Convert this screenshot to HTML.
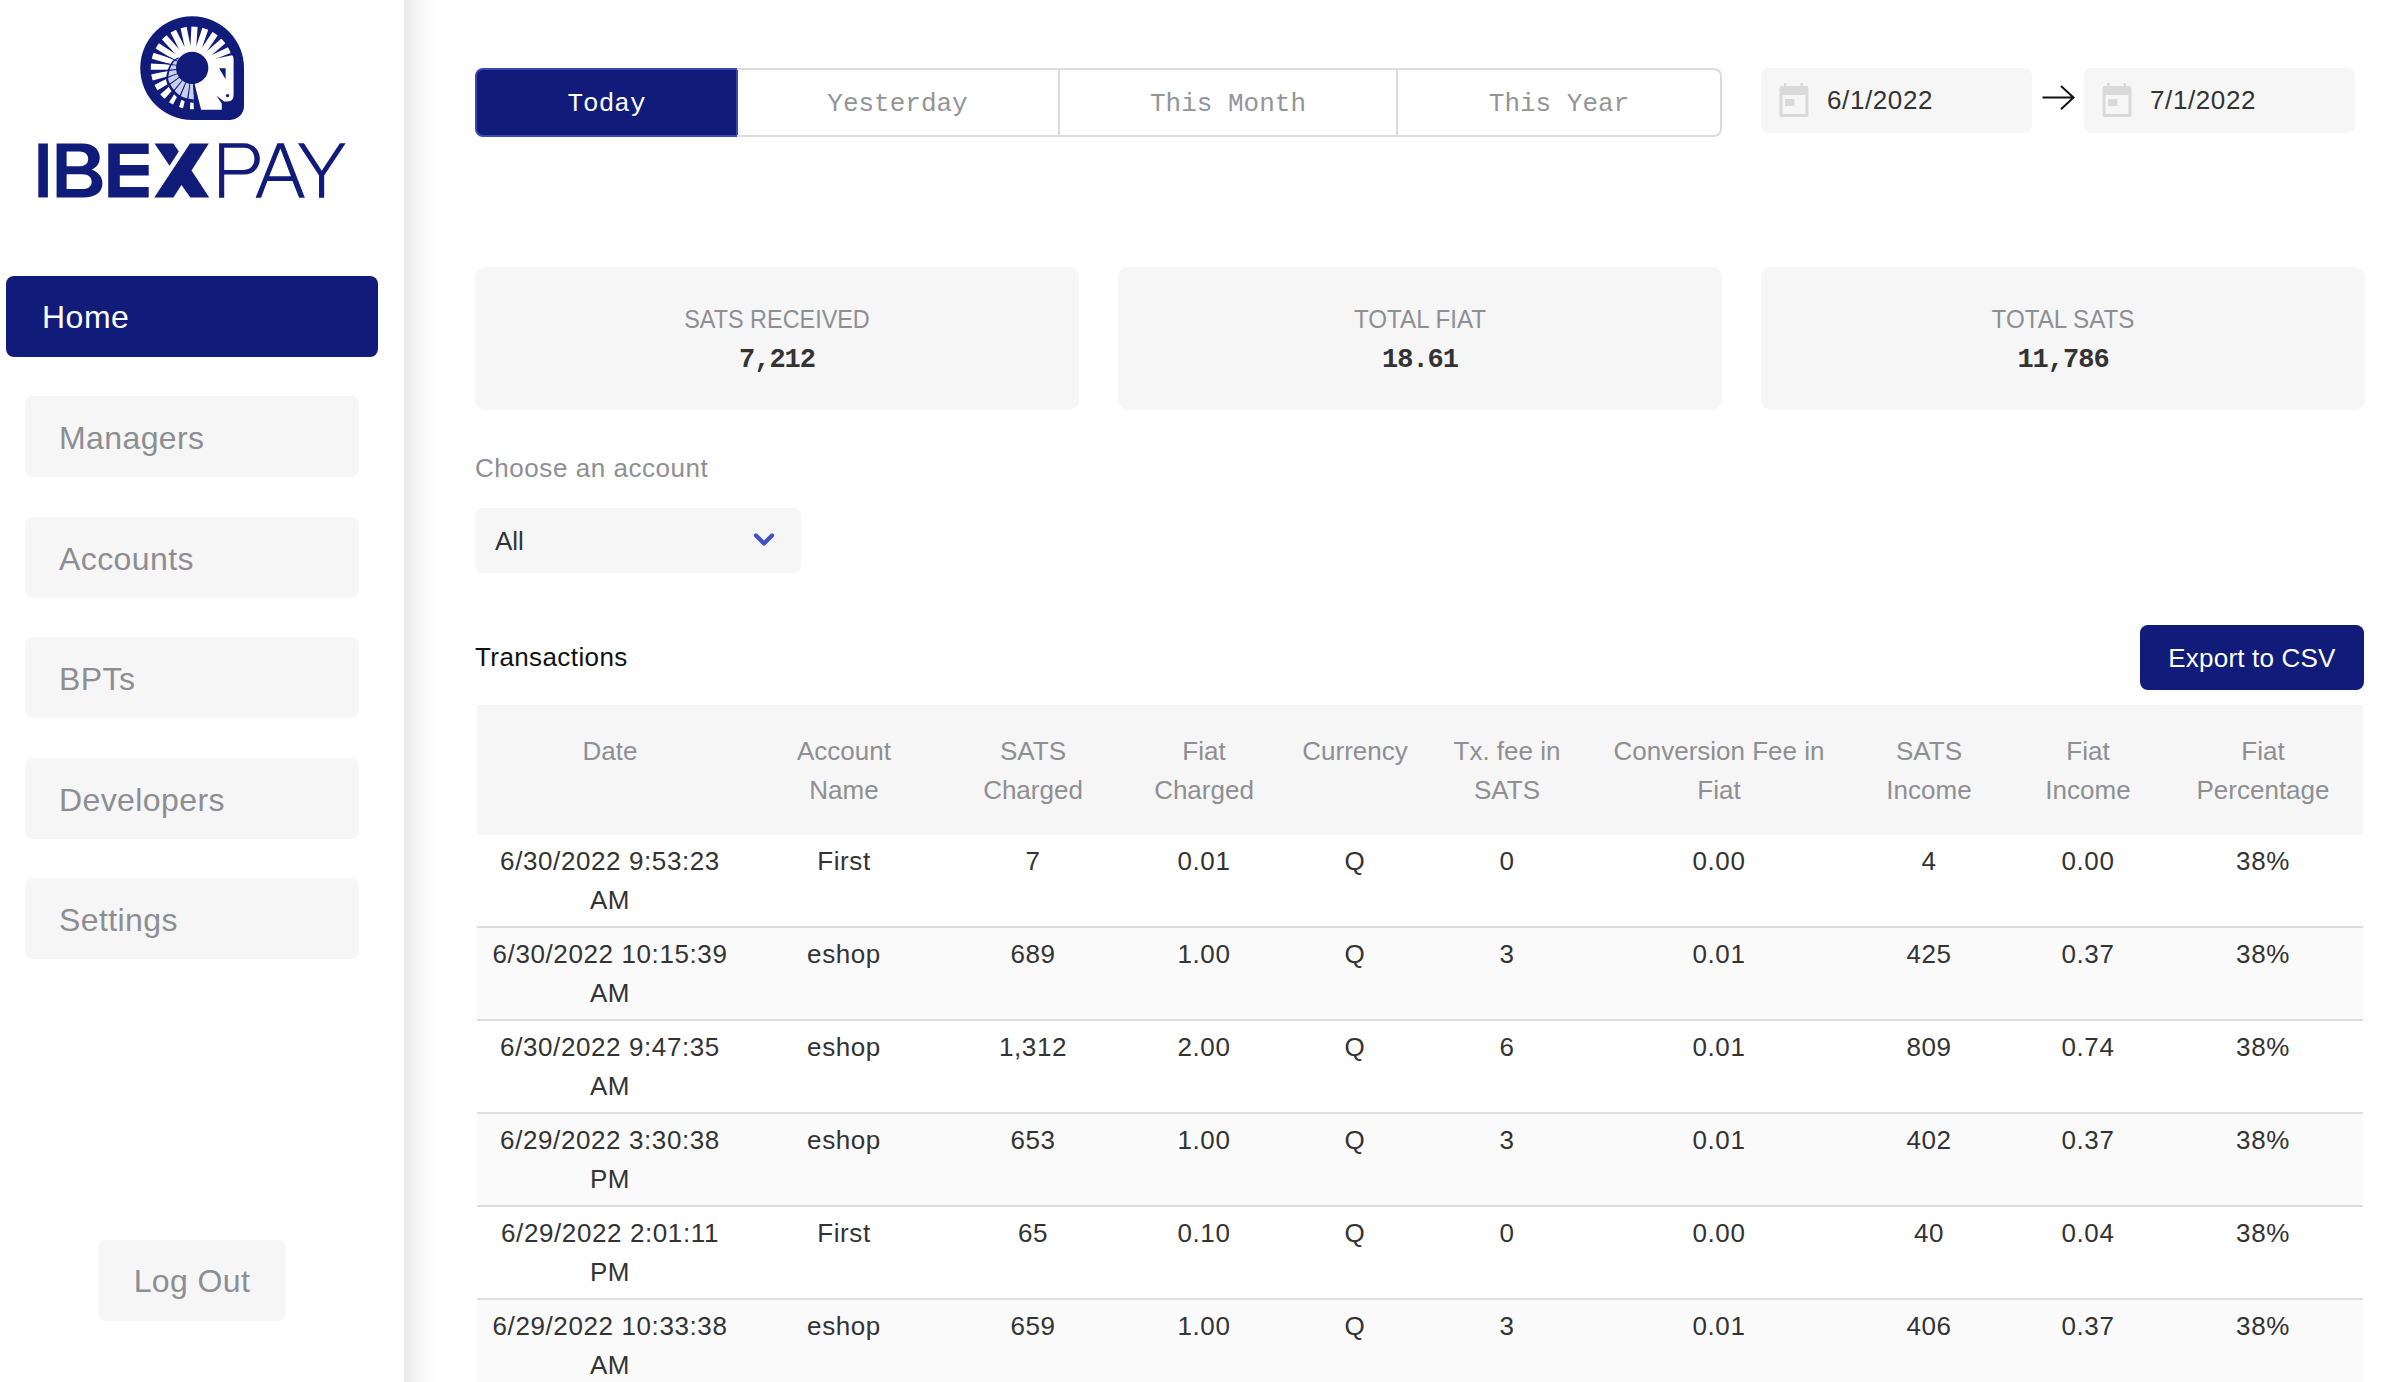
<!DOCTYPE html>
<html><head><meta charset="utf-8">
<style>
*{box-sizing:border-box;margin:0;padding:0}
html,body{width:2400px;height:1382px;overflow:hidden;background:#fff;font-family:"Liberation Sans",sans-serif}
.abs{position:absolute}
.side{position:absolute;left:0;top:0;width:404px;height:1382px;background:#fff}
.shadow{position:absolute;left:404px;top:0;width:34px;height:1382px;background:linear-gradient(to right,#e9e9e9,#f4f4f4 35%,#fdfdfd 80%,#fff)}
.nav{position:absolute;left:25px;width:334px;height:81px;background:#f6f6f6;border-radius:8px;color:#8c8e93;font-size:32px;line-height:84px;padding-left:34px;letter-spacing:0.4px}
.home{left:6px;width:372px;background:#111b7a;color:#fff;padding-left:36px;letter-spacing:0.5px;line-height:83px}
.logout{position:absolute;left:98px;top:1240px;width:188px;height:81px;background:#f6f6f6;border-radius:8px;color:#8c8e93;font-size:32px;line-height:83px;text-align:center;letter-spacing:0.4px}
.seg{position:absolute;top:68px;height:69px;border:2px solid #dcdcdc;color:#939497;font-family:"Liberation Mono",monospace;font-size:26px;line-height:68px;text-align:center}
.date{position:absolute;top:68px;width:271px;height:65px;background:#f6f6f6;border-radius:8px;color:#333;font-size:26px;line-height:65px;letter-spacing:0.6px}
.card{position:absolute;top:267px;width:604px;height:143px;background:#f6f6f6;border-radius:10px;text-align:center}
.card .l{position:absolute;left:0;right:0;top:37px;color:#8e8f93;font-size:26px;line-height:30px;transform:scaleX(0.9)}
.card .v{position:absolute;left:0;right:0;top:78px;color:#333;font-family:"Liberation Mono",monospace;font-weight:bold;font-size:27px;line-height:30px;letter-spacing:-1px}
.thead{position:absolute;left:477px;top:705px;width:1886px;height:130px;background:#f6f6f6}
.row{position:absolute;left:477px;width:1886px;height:93px;border-bottom:2px solid #dddddd}
.c{position:absolute;width:300px;text-align:center;font-size:26px;line-height:39px;letter-spacing:0.6px}
.th{color:#8e8f93;letter-spacing:0}
.td{color:#333}
</style></head><body>
<div class="side">
  <!--LOGO--><svg class="abs" style="left:132px;top:8px" width="120" height="120" viewBox="0 0 1382 1382">
<path fill="#111b7a" d="M692 95 A597 597 0 0 0 95 692 A597 597 0 0 0 692 1289 L1130 1289 A160 160 0 0 0 1290 1129 L1290 692 A597 597 0 0 0 692 95 Z"/>
<path fill="#fff" d="M692.0 690.0 L1135.5 517.1 L1125.3 493.1 L1113.9 469.6 L1101.2 446.8 L1087.3 424.8 L1072.2 403.6 L1055.9 383.2 L1038.6 363.7 L1020.2 345.2 L1000.8 327.7 L980.5 311.4 L959.3 296.1 L937.3 282.1 L914.6 269.3 L891.3 257.7 L867.3 247.4 L842.8 238.5 L817.8 230.9 L792.5 224.7 L766.9 219.9 L741.0 216.5 L715.0 214.6 L688.9 214.0 L662.9 214.9 L636.9 217.2 L611.1 220.9 L585.5 226.1 L560.3 232.6 L535.4 240.5 L511.0 249.7 L487.2 260.3 L464.0 272.2 L441.4 285.3 L419.6 299.6 L398.7 315.1 L378.6 331.8 L359.4 349.5 L341.3 368.2 L324.2 387.9 L308.2 408.5 L293.3 429.9 L279.7 452.1 L267.3 475.1 L256.1 498.7 L246.3 522.8 L237.8 547.5 L230.7 572.6 L225.0 598.0 L220.6 623.7 L217.7 649.6 L216.2 675.7 L216.1 701.8 L217.5 727.8 L220.3 753.7 L224.5 779.5 L230.1 804.9 L237.1 830.1 L245.4 854.8 L255.1 879.0 L266.1 902.6 L278.4 925.6 L291.9 947.9 L306.7 969.4 L322.5 990.1 L339.5 1009.9 L357.6 1028.7 L376.6 1046.5 L396.6 1063.3 L417.5 1078.9 L439.2 1093.3 L461.7 1106.6 L484.9 1118.6 L508.6 1129.3 L533.0 1138.7 L557.8 1146.7 L583.0 1153.4 L608.5 1158.6 L634.3 1162.5 L660.3 1164.9 L686.4 1166.0 L712.4 1165.6 Z"/>
<path fill="#111b7a" d="M917.8 542.0 L1122.7 444.1 L1089.5 393.4 Z M865.6 493.8 L1042.7 339.3 L997.5 299.3 Z M806.1 458.6 L938.0 259.4 L883.9 232.7 Z M740.6 439.7 L816.0 209.8 L756.8 198.3 Z M673.1 436.7 L685.2 194.1 L625.1 198.6 Z M607.4 451.6 L554.9 213.4 L498.1 233.5 Z M542.5 474.8 L434.4 266.2 L384.7 300.7 Z M499.6 528.8 L331.8 349.0 L293.2 395.2 Z M456.7 581.8 L254.8 455.8 L229.6 510.6 Z M455.2 650.7 L208.5 579.3 L198.7 638.5 Z M478.1 711.8 L196.5 710.7 L202.5 769.9 Z M514.7 758.4 L219.4 840.6 L240.7 895.8 Z M571.2 778.9 L275.8 959.8 L310.6 1007.1 Z M629.9 768.4 L361.7 1060.0 L415.3 1101.6 Z M668.4 745.2 L462.3 1129.6 L535.7 1160.7 Z M689.3 709.8 L583.7 1174.0 L666.6 1185.4 Z"/>
<path fill="#c9d0ee" d="M542.3 573.0 L534.3 576.2 L526.4 579.8 L518.5 583.9 L510.6 588.4 L502.9 593.3 L495.3 598.7 L487.8 604.5 L480.5 610.8 L473.4 617.5 L467.3 624.9 L461.6 632.6 L456.2 640.7 L451.0 649.2 L446.2 657.9 L441.7 667.0 L437.5 676.4 L433.1 686.0 L429.1 696.0 L425.5 706.2 L422.3 716.8 L419.5 727.6 L417.2 738.6 L413.9 750.2 L411.1 762.1 L408.8 774.3 L407.1 786.8 L405.9 799.5 L405.2 812.5 L405.2 825.7 L407.8 838.0 L411.8 849.7 L416.3 861.4 L421.3 872.9 L426.8 884.3 L432.8 895.6 L439.2 906.7 L446.1 917.6 L453.5 928.2 L461.3 938.7 L469.2 949.3 L477.3 960.1 L485.9 970.6 L495.0 980.8 L504.6 990.8 L514.6 1000.4 L525.2 1009.5 L536.7 1017.3 L548.6 1024.7 L560.7 1031.6 L573.2 1038.2 L586.1 1044.2 L599.2 1049.8 L612.6 1054.4 L626.4 1058.4 L640.3 1061.9 L654.4 1064.8 L668.6 1067.2 L683.0 1069.1 L697.4 1070.2 L711.9 1070.5 L699.9 839.8 L694.1 840.0 L688.4 840.0 L682.7 839.7 L677.0 839.2 L671.3 838.6 L665.7 837.7 L660.1 836.6 L654.5 835.2 L649.0 833.7 L643.6 832.0 L638.2 830.0 L632.9 827.9 L627.7 825.5 L622.6 823.0 L617.6 820.2 L612.7 817.3 L607.9 814.2 L603.2 810.9 L598.7 807.4 L594.3 803.8 L590.0 800.0 L585.9 796.0 L581.9 791.9 L578.1 787.6 L574.5 783.2 L571.0 778.7 L567.7 774.0 L564.6 769.2 L561.7 764.3 L558.9 759.3 L556.4 754.1 L554.1 748.9 L551.9 743.6 L550.0 738.3 L548.2 732.8 L546.7 727.3 L545.4 721.7 L544.3 716.1 L543.4 710.5 L542.7 704.8 L542.3 699.1 L542.0 693.4 L542.0 687.7 L542.2 682.0 L542.6 676.3 L543.3 670.6 L544.1 664.9 L545.2 659.3 L546.4 653.8 L547.9 648.2 L549.6 642.8 L551.5 637.4 L553.6 632.1 L555.9 626.8 L558.4 621.7 L561.1 616.7 L564.0 611.7 L567.1 606.9 L570.4 602.2 L573.8 597.7 Z"/>
<path fill="#111b7a" d="M536.8 568.7 L528.4 572.0 L520.2 575.7 L511.9 579.9 L503.8 584.5 L495.7 589.6 L487.7 595.2 L479.9 601.2 L472.3 607.7 L464.9 614.7 L458.5 622.3 L452.4 630.3 L446.7 638.8 L441.3 647.5 L436.2 656.6 L431.4 666.1 L426.9 675.8 L422.4 685.8 L418.1 696.2 L414.3 706.9 L410.9 717.9 L408.0 729.2 L405.5 740.7 L402.1 752.8 L399.2 765.2 L396.8 777.9 L395.0 790.9 L393.8 804.2 L393.1 817.7 L393.0 831.4 L395.7 844.3 L399.8 856.6 L404.4 868.8 L409.5 880.9 L415.1 892.9 L421.2 904.8 L427.8 916.4 L435.0 927.9 L442.6 939.1 L450.7 950.1 L458.9 961.4 L467.3 972.7 L476.2 983.7 L485.7 994.5 L495.7 1005.0 L506.2 1015.1 L517.3 1024.7 L529.2 1033.0 L541.6 1040.9 L554.3 1048.3 L567.4 1055.3 L580.8 1061.8 L594.5 1067.8 L608.7 1072.8 L623.0 1077.1 L637.6 1080.9 L652.4 1084.2 L667.4 1086.8 L682.5 1089.0 L697.7 1090.2 L713.0 1090.5 L710.9 1050.5 L697.1 1050.2 L683.4 1049.3 L669.8 1047.6 L656.3 1045.5 L642.9 1042.9 L629.7 1039.7 L616.6 1036.1 L603.8 1031.9 L591.3 1026.7 L579.1 1021.0 L567.2 1015.0 L555.5 1008.5 L544.2 1001.5 L533.2 994.2 L523.0 985.6 L513.4 976.5 L504.3 967.1 L495.6 957.4 L487.3 947.5 L479.5 937.3 L472.0 927.2 L464.4 917.3 L457.3 907.2 L450.6 896.9 L444.3 886.4 L438.5 875.7 L433.2 864.9 L428.3 853.9 L423.9 842.8 L419.9 831.7 L417.3 819.9 L417.4 807.3 L418.0 794.9 L419.2 782.7 L420.9 770.7 L423.0 759.1 L425.7 747.7 L428.9 736.6 L431.1 726.0 L433.7 715.6 L436.7 705.5 L440.1 695.7 L443.9 686.2 L448.0 676.9 L451.9 667.9 L456.2 659.2 L460.8 650.8 L465.6 642.7 L470.8 634.9 L476.2 627.4 L482.0 620.3 L488.8 613.9 L495.7 607.8 L502.9 602.2 L510.1 597.0 L517.5 592.2 L525.0 587.9 L532.6 583.9 L540.2 580.4 L547.8 577.3 Z"/>
<path fill="#111b7a" d="M530.5 610.3 L331.9 515.6 L325.2 530.2 L526.4 619.4 Z M515.3 655.6 L298.7 616.6 L296.1 632.4 L513.6 665.4 Z M512.4 703.3 L293.3 722.7 L294.9 738.6 L513.4 713.3 Z M522.3 750.1 L315.9 826.5 L321.7 841.4 L525.9 759.4 Z M544.1 792.7 L365.1 920.6 L374.6 933.5 L550.0 800.7 Z M576.3 828.0 L437.3 998.6 L449.9 1008.5 L584.1 834.2 Z M616.7 853.6 L527.5 1054.7 L542.2 1061.0 L625.9 857.5 Z M662.4 867.6 L629.3 1085.1 L645.2 1087.3 L672.3 869.0 Z"/>
<path fill="#fff" d="M760 500 L972 581 L1150 545 Q1170 550 1170 600 L1170 1000 Q1170 1077 1100 1077 L1062 1078 L972 1012 L1034 1101 L1034 1171 L796 1171 L722 880 Z"/>
<circle fill="#111b7a" cx="693" cy="690" r="186"/>
<path fill="#111b7a" d="M1003 695 L1078 695 L1078 820 Z"/>
<circle fill="#111b7a" cx="1100" cy="1009" r="19"/>
</svg><svg class="abs" style="left:30px;top:135px" width="185" height="70" viewBox="0 0 2400 908">
<g fill="#111b7a" fill-rule="evenodd">
<rect x="108" y="110" width="124" height="700"/>
<path d="M345 110 L680 110 C820 110 905 185 905 295 C905 370 860 425 800 450 C880 475 940 540 940 625 C940 740 850 810 690 810 L345 810 Z M475 215 L640 215 C715 215 755 255 755 310 C755 365 715 405 640 405 L475 405 Z M475 510 L680 510 C760 510 800 555 800 605 C800 660 760 700 680 700 L475 700 Z"/>
<path d="M1015 110 H1540 V245 H1165 V390 H1540 V525 H1165 V675 H1540 V810 H1015 Z"/>
<path d="M2075 110 H2320 L2095 460 L2325 810 H2080 L1965 650 L1860 810 H1612 Z"/>
<path d="M1615 110 H1860 L1930 215 L1810 400 Z"/>
</g></svg><svg class="abs" style="left:210px;top:135px" width="145" height="70" viewBox="0 0 2400 1159">
<g fill="#111b7a" fill-rule="evenodd">
<path d="M150 135 H560 C720 135 825 250 825 395 C825 540 720 655 560 655 H235 V1040 H150 Z M235 210 V578 H560 C670 578 735 500 735 395 C735 290 670 210 560 210 Z"/>
<path d="M1115 135 H1220 L1570 1040 H1475 L1365 760 H950 L845 1040 H755 Z M1165 225 L980 685 H1340 Z"/>
<path d="M1455 135 H1555 L1850 590 L2150 135 H2245 L1890 670 V1040 H1805 V670 Z"/>
</g></svg><!--/LOGO-->
  <div class="nav home" style="top:276px">Home</div>
  <div class="nav" style="top:396px">Managers</div>
  <div class="nav" style="top:517px">Accounts</div>
  <div class="nav" style="top:637px">BPTs</div>
  <div class="nav" style="top:758px">Developers</div>
  <div class="nav" style="top:878px">Settings</div>
  <div class="logout">Log Out</div>
</div>
<div class="shadow"></div>

<!-- segmented -->
<div class="seg" style="left:475px;width:263px;background:#111b7a;border-color:#3a48b0;color:#fff;border-radius:8px 0 0 8px">Today</div>
<div class="seg" style="left:737px;width:323px;border-left:none">Yesterday</div>
<div class="seg" style="left:1058px;width:340px">This Month</div>
<div class="seg" style="left:1396px;width:326px;border-left:2px solid #dcdcdc;border-radius:0 8px 8px 0">This Year</div>

<div class="date" style="left:1761px"><svg class="abs" style="left:17px;top:15px" width="32" height="35" viewBox="0 0 32 35"><g fill="#d9d9d9"><rect x="6" y="0" width="2.4" height="5"/><rect x="22.5" y="0" width="2.4" height="5"/><path d="M3.5 3 H28 Q30.5 3 30.5 5.5 V32 Q30.5 34 28.5 34 H3.5 Q1.5 34 1.5 32 V5.5 Q1.5 3 3.5 3 Z M4.5 12 V31 H27.5 V12 Z"/><rect x="7" y="16" width="9.5" height="7"/></g></svg><span class="abs" style="left:66px">6/1/2022</span></div>
<svg class="abs" style="left:2040px;top:84px" width="38" height="28" viewBox="0 0 38 28"><path d="M2.5 13.6 H33.5 M21 2 L33.5 13.6 L21 25.2" fill="none" stroke="#111" stroke-width="2"/></svg>
<div class="date" style="left:2084px"><svg class="abs" style="left:17px;top:15px" width="32" height="35" viewBox="0 0 32 35"><g fill="#d9d9d9"><rect x="6" y="0" width="2.4" height="5"/><rect x="22.5" y="0" width="2.4" height="5"/><path d="M3.5 3 H28 Q30.5 3 30.5 5.5 V32 Q30.5 34 28.5 34 H3.5 Q1.5 34 1.5 32 V5.5 Q1.5 3 3.5 3 Z M4.5 12 V31 H27.5 V12 Z"/><rect x="7" y="16" width="9.5" height="7"/></g></svg><span class="abs" style="left:66px">7/1/2022</span></div>

<div class="card" style="left:475px"><div class="l">SATS RECEIVED</div><div class="v">7,212</div></div>
<div class="card" style="left:1118px"><div class="l" style="transform:scaleX(0.93)">TOTAL FIAT</div><div class="v">18.61</div></div>
<div class="card" style="left:1761px"><div class="l" style="transform:scaleX(0.93)">TOTAL SATS</div><div class="v">11,786</div></div>

<div class="abs" style="left:475px;top:453px;font-size:26px;color:#8e8f93;letter-spacing:0.55px">Choose an account</div>
<div class="abs" style="left:475px;top:508px;width:326px;height:65px;background:#f6f6f6;border-radius:8px"><span class="abs" style="left:20px;top:18px;font-size:26px;color:#333">All</span><svg class="abs" style="left:278px;top:24px" width="22" height="17" viewBox="0 0 22 17"><path d="M3 3.5 L11 11.5 L19 3.5" fill="none" stroke="#4152c4" stroke-width="4.2" stroke-linecap="round" stroke-linejoin="round"/></svg></div>

<div class="abs" style="left:475px;top:642px;font-size:26px;color:#111;letter-spacing:0.4px">Transactions</div>
<div class="abs" style="left:2140px;top:625px;width:224px;height:65px;background:#111b7a;border-radius:8px;color:#fff;font-size:26px;line-height:67px;text-align:center;letter-spacing:0.2px">Export to CSV</div>

<div class="thead"></div>
<!--TBL-->
<div class="c th" style="left:460px;top:732px">Date</div>
<div class="c th" style="left:694px;top:732px">Account<br>Name</div>
<div class="c th" style="left:883px;top:732px">SATS<br>Charged</div>
<div class="c th" style="left:1054px;top:732px">Fiat<br>Charged</div>
<div class="c th" style="left:1205px;top:732px">Currency</div>
<div class="c th" style="left:1357px;top:732px">Tx. fee in<br>SATS</div>
<div class="c th" style="left:1569px;top:732px">Conversion Fee in<br>Fiat</div>
<div class="c th" style="left:1779px;top:732px">SATS<br>Income</div>
<div class="c th" style="left:1938px;top:732px">Fiat<br>Income</div>
<div class="c th" style="left:2113px;top:732px">Fiat<br>Percentage</div>
<div class="row" style="top:835px;background:#fff"></div>
<div class="c td" style="left:460px;top:842px">6/30/2022 9:53:23<br>AM</div>
<div class="c td" style="left:694px;top:842px">First</div>
<div class="c td" style="left:883px;top:842px">7</div>
<div class="c td" style="left:1054px;top:842px">0.01</div>
<div class="c td" style="left:1205px;top:842px">Q</div>
<div class="c td" style="left:1357px;top:842px">0</div>
<div class="c td" style="left:1569px;top:842px">0.00</div>
<div class="c td" style="left:1779px;top:842px">4</div>
<div class="c td" style="left:1938px;top:842px">0.00</div>
<div class="c td" style="left:2113px;top:842px">38%</div>
<div class="row" style="top:928px;background:#fafafa"></div>
<div class="c td" style="left:460px;top:935px">6/30/2022 10:15:39<br>AM</div>
<div class="c td" style="left:694px;top:935px">eshop</div>
<div class="c td" style="left:883px;top:935px">689</div>
<div class="c td" style="left:1054px;top:935px">1.00</div>
<div class="c td" style="left:1205px;top:935px">Q</div>
<div class="c td" style="left:1357px;top:935px">3</div>
<div class="c td" style="left:1569px;top:935px">0.01</div>
<div class="c td" style="left:1779px;top:935px">425</div>
<div class="c td" style="left:1938px;top:935px">0.37</div>
<div class="c td" style="left:2113px;top:935px">38%</div>
<div class="row" style="top:1021px;background:#fff"></div>
<div class="c td" style="left:460px;top:1028px">6/30/2022 9:47:35<br>AM</div>
<div class="c td" style="left:694px;top:1028px">eshop</div>
<div class="c td" style="left:883px;top:1028px">1,312</div>
<div class="c td" style="left:1054px;top:1028px">2.00</div>
<div class="c td" style="left:1205px;top:1028px">Q</div>
<div class="c td" style="left:1357px;top:1028px">6</div>
<div class="c td" style="left:1569px;top:1028px">0.01</div>
<div class="c td" style="left:1779px;top:1028px">809</div>
<div class="c td" style="left:1938px;top:1028px">0.74</div>
<div class="c td" style="left:2113px;top:1028px">38%</div>
<div class="row" style="top:1114px;background:#fafafa"></div>
<div class="c td" style="left:460px;top:1121px">6/29/2022 3:30:38<br>PM</div>
<div class="c td" style="left:694px;top:1121px">eshop</div>
<div class="c td" style="left:883px;top:1121px">653</div>
<div class="c td" style="left:1054px;top:1121px">1.00</div>
<div class="c td" style="left:1205px;top:1121px">Q</div>
<div class="c td" style="left:1357px;top:1121px">3</div>
<div class="c td" style="left:1569px;top:1121px">0.01</div>
<div class="c td" style="left:1779px;top:1121px">402</div>
<div class="c td" style="left:1938px;top:1121px">0.37</div>
<div class="c td" style="left:2113px;top:1121px">38%</div>
<div class="row" style="top:1207px;background:#fff"></div>
<div class="c td" style="left:460px;top:1214px">6/29/2022 2:01:11<br>PM</div>
<div class="c td" style="left:694px;top:1214px">First</div>
<div class="c td" style="left:883px;top:1214px">65</div>
<div class="c td" style="left:1054px;top:1214px">0.10</div>
<div class="c td" style="left:1205px;top:1214px">Q</div>
<div class="c td" style="left:1357px;top:1214px">0</div>
<div class="c td" style="left:1569px;top:1214px">0.00</div>
<div class="c td" style="left:1779px;top:1214px">40</div>
<div class="c td" style="left:1938px;top:1214px">0.04</div>
<div class="c td" style="left:2113px;top:1214px">38%</div>
<div class="row" style="top:1300px;background:#fafafa"></div>
<div class="c td" style="left:460px;top:1307px">6/29/2022 10:33:38<br>AM</div>
<div class="c td" style="left:694px;top:1307px">eshop</div>
<div class="c td" style="left:883px;top:1307px">659</div>
<div class="c td" style="left:1054px;top:1307px">1.00</div>
<div class="c td" style="left:1205px;top:1307px">Q</div>
<div class="c td" style="left:1357px;top:1307px">3</div>
<div class="c td" style="left:1569px;top:1307px">0.01</div>
<div class="c td" style="left:1779px;top:1307px">406</div>
<div class="c td" style="left:1938px;top:1307px">0.37</div>
<div class="c td" style="left:2113px;top:1307px">38%</div>
<!--/TBL-->
</body></html>
